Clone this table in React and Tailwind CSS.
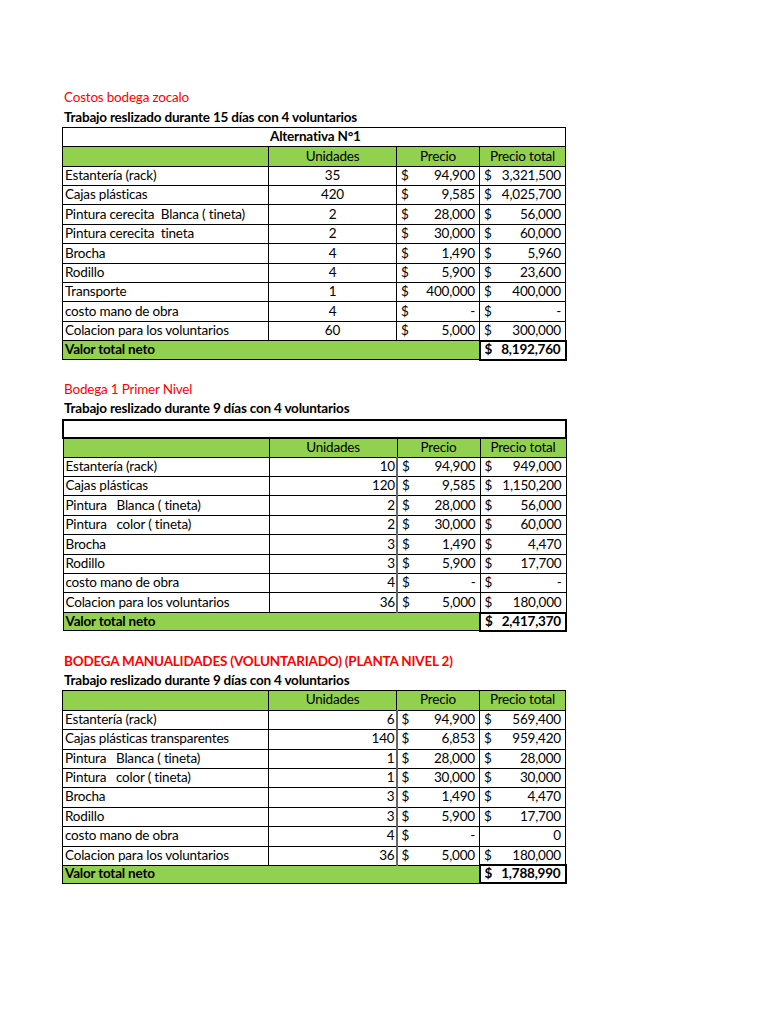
const t1 = [
  ['Estantería (rack)', '35', '94,900', '3,321,500'],
  ['Cajas plásticas', '420', '9,585', '4,025,700'],
  ['Pintura cerecita  Blanca ( tineta)', '2', '28,000', '56,000'],
  ['Pintura cerecita  tineta', '2', '30,000', '60,000'],
  ['Brocha', '4', '1,490', '5,960'],
  ['Rodillo', '4', '5,900', '23,600'],
  ['Transporte', '1', '400,000', '400,000'],
  ['costo mano de obra', '4', '-', '-'],
  ['Colacion para los voluntarios', '60', '5,000', '300,000'],
];

const t2 = [
  ['Estantería (rack)', '10', '94,900', '949,000'],
  ['Cajas plásticas', '120', '9,585', '1,150,200'],
  ['Pintura   Blanca ( tineta)', '2', '28,000', '56,000'],
  ['Pintura   color ( tineta)', '2', '30,000', '60,000'],
  ['Brocha', '3', '1,490', '4,470'],
  ['Rodillo', '3', '5,900', '17,700'],
  ['costo mano de obra', '4', '-', '-'],
  ['Colacion para los voluntarios', '36', '5,000', '180,000'],
];

const t3 = [
  ['Estantería (rack)', '6', '94,900', '569,400'],
  ['Cajas plásticas transparentes', '140', '6,853', '959,420'],
  ['Pintura   Blanca ( tineta)', '1', '28,000', '28,000'],
  ['Pintura   color ( tineta)', '1', '30,000', '30,000'],
  ['Brocha', '3', '1,490', '4,470'],
  ['Rodillo', '3', '5,900', '17,700'],
  ['costo mano de obra', '4', '-', '0', true],
  ['Colacion para los voluntarios', '36', '5,000', '180,000'],
];

// spreadsheet rows are ~19.4px; snap each row to whole pixels so tables don't drift
const edge = (k) => Math.round(88 + 19.4 * k);
const rowH = (k, thick) => {
  const h = edge(k + 1) - edge(k) - (thick ? 1 : 0);
  if (h === 20) return 'h-[20px]';
  if (h === 18) return 'h-[18px]';
  return 'h-[19px]';
};

function Money({ value, noSign }) {
  return (
    <div className="flex justify-between px-[4px]">
      <span>{noSign ? '' : '$'}</span>
      <span>{value}</span>
    </div>
  );
}

function Sheet({ rows, centerUnits, top, total, start }) {
  const cell = 'border border-black p-0 leading-none';
  let k = start;
  return (
    <table className="table-fixed border-collapse w-[503px] border border-black">
      <colgroup>
        <col className="w-[206px]" />
        <col className="w-[128px]" />
        <col className="w-[83px]" />
        <col className="w-[86px]" />
      </colgroup>
      <tbody>
        {top !== undefined && (
          <tr className={rowH(k++, !top)}>
            <td colSpan={4} className={`${top ? 'border border-black' : 'border-2 border-black'} p-0 font-bold leading-none`}>
              <span className="pl-[207px]">{top}</span>
            </td>
          </tr>
        )}
        <tr className={`${rowH(k++)} bg-[#92d050]`}>
          <td className={cell}></td>
          <td className={`${cell} text-center`}>Unidades</td>
          <td className={`${cell} text-center`}>Precio</td>
          <td className={`${cell} text-center`}>Precio total</td>
        </tr>
        {rows.map((r, i) => (
          <tr key={i} className={rowH(k++)}>
            <td className={`${cell} pl-[2px] whitespace-pre`}>{r[0]}</td>
            <td className={`${cell} ${centerUnits ? 'text-center' : 'text-right pr-[1px] border-r-2 border-r-[#666]'}`}>{r[1]}</td>
            <td className={cell}><Money value={r[2]} /></td>
            <td className={cell}><Money value={r[3]} noSign={r[4]} /></td>
          </tr>
        ))}
        <tr className={rowH(k++, true)}>
          <td colSpan={3} className={`${cell} bg-[#92d050] font-bold pl-[2px]`}>Valor total neto</td>
          <td className="border-2 border-black p-0 font-bold leading-none">
            <div className="flex justify-between px-[4px]">
              <span>$</span>
              <span>{total}</span>
            </div>
          </td>
        </tr>
      </tbody>
    </table>
  );
}

function Line({ k, children, className = '' }) {
  return <div className={`${rowH(k)} flex items-center ${className}`}>{children}</div>;
}

export default function App() {
  return (
    <div className="min-h-screen bg-white pt-[88px] pl-[62px] text-black text-[13.5px] tracking-[-0.2px]" style={{ fontFamily: 'Lato, "Open Sans", sans-serif' }}>
      <Line k={0} className="text-[#ff0000] pl-[2px]">Costos bodega zocalo</Line>
      <Line k={1} className="font-bold pl-[2px]">Trabajo reslizado durante 15 días con 4 voluntarios</Line>
      <Sheet rows={t1} centerUnits top="Alternativa N°1" total="8,192,760" start={2} />
      <Line k={14} />
      <Line k={15} className="text-[#ff0000] pl-[2px]">Bodega 1 Primer Nivel</Line>
      <Line k={16} className="font-bold pl-[2px]">Trabajo reslizado durante 9 días con 4 voluntarios</Line>
      <Sheet rows={t2} top="" total="2,417,370" start={17} />
      <Line k={28} />
      <Line k={29} className="text-[#ff0000] font-bold pl-[2px]">BODEGA MANUALIDADES (VOLUNTARIADO) (PLANTA NIVEL 2)</Line>
      <Line k={30} className="font-bold pl-[2px]">Trabajo reslizado durante 9 días con 4 voluntarios</Line>
      <Sheet rows={t3} total="1,788,990" start={31} />
    </div>
  );
}
